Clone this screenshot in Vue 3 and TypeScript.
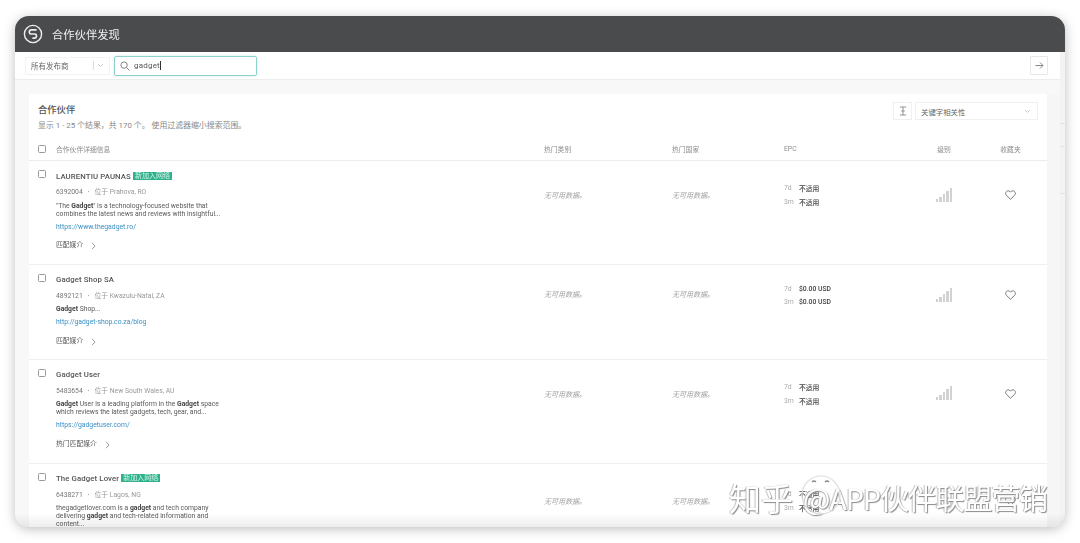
<script setup lang="ts">
interface Epc { label: string; value: string }
interface Row {
  name: string
  isNew: boolean
  id: string
  place: string
  desc: [string, boolean][][]
  url?: string
  match?: string
  epc: string
  rowClass: string
}
const rows: Row[] = [
  {
    name: 'LAURENTIU PAUNAS', isNew: true, id: '6392004', place: 'Prahova, RO',
    desc: [[['"The ', false], ['Gadget', true], ['" is a technology-focused website that', false]],
      [['combines the latest news and reviews with insightful...', false]]],
    url: 'https://www.thegadget.ro/', match: '匹配媒介', epc: '不适用', rowClass: 'r1'
  },
  {
    name: 'Gadget Shop SA', isNew: false, id: '4892121', place: 'Kwazulu-Natal, ZA',
    desc: [[['Gadget', true], [' Shop...', false]]],
    url: 'http://gadget-shop.co.za/blog', match: '匹配媒介', epc: '$0.00 USD', rowClass: 'r2'
  },
  {
    name: 'Gadget User', isNew: false, id: '5483654', place: 'New South Wales, AU',
    desc: [[['Gadget', true], [' User is a leading platform in the ', false], ['Gadget', true], [' space', false]],
      [['which reviews the latest gadgets, tech, gear, and...', false]]],
    url: 'https://gadgetuser.com/', match: '热门匹配媒介', epc: '不适用', rowClass: 'r3'
  },
  {
    name: 'The Gadget Lover', isNew: true, id: '6438271', place: 'Lagos, NG',
    desc: [[['thegadgetlover.com is a ', false], ['gadget', true], [' and tech company', false]],
      [['delivering ', false], ['gadget', true], [' and tech-related information and', false]],
      [['content...', false]]],
    epc: '不适用', rowClass: 'r4'
  }
]
const bars = [3, 5, 8, 11, 14]
function epcLines(v: string): Epc[] {
  return [{ label: '7d', value: v }, { label: '3m', value: v }]
}
</script>

<template>
  <div class="page">
    <div class="window">
      <header class="head">
        <svg class="logo" width="20" height="20" viewBox="0 0 20 20" fill="none" stroke="#eee">
          <circle cx="10" cy="10" r="8.6" stroke-width="1.4" />
          <path d="M13.6 5.800H8.200Q6.400 5.800 6.400 7.600V8.600Q6.400 10 8 10H11.800Q13.400 10 13.400 11.600V12.600Q13.400 14.200 11.800 14.200H9.400" stroke-width="1.700" />
        </svg>
        <span class="title">合作伙伴发现</span>
      </header>

      <div class="lower">
        <div class="main">
          <div class="toolbar">
            <div class="pub">
              <span class="pub-text">所有发布商</span>
              <span class="pub-sep"></span>
              <svg width="7" height="5" viewBox="0 0 7 5" fill="none" stroke="#ccc"><path d="M1 1l2.500 2.500L6 1" /></svg>
            </div>
            <div class="search">
              <svg width="10" height="10" viewBox="0 0 11 11" fill="none" stroke="#777" stroke-width="1"><circle cx="4.500" cy="4.500" r="3.500" /><path d="M7 7l3.500 3.500" /></svg>
              <span class="query">gadget</span>
              <span class="caret"></span>
            </div>
            <button class="go">
              <svg width="9" height="9" viewBox="0 0 9 9" fill="none" stroke="#888"><path d="M0.500 4.500h7.500M5 1.500l3 3-3 3" /></svg>
            </button>
          </div>

          <div class="body">
            <section class="card">
              <div class="card-top">
                <div>
                  <h2 class="card-title">合作伙伴</h2>
                  <p class="card-sub">显示 1 - 25 个结果，共 170 个。 使用过滤器缩小搜索范围。</p>
                </div>
                <div class="sort">
                  <div class="sort-btn">
                    <svg width="8" height="10" viewBox="0 0 9 10" fill="none" stroke="#888"><path d="M1 .5h7M4.500 .5v9M1 9.500h7M2.500 5h4" /></svg>
                  </div>
                  <div class="sort-select">
                    <span>关键字相关性</span>
                    <svg width="7" height="5" viewBox="0 0 7 5" fill="none" stroke="#ccc"><path d="M1 1l2.500 2.500L6 1" /></svg>
                  </div>
                </div>
              </div>

              <div class="grid thead">
                <div class="cell-check"><span class="check"></span></div>
                <div>合作伙伴详细信息</div>
                <div>热门类别</div>
                <div>热门国家</div>
                <div>EPC</div>
                <div class="center">级别</div>
                <div class="center">收藏夹</div>
              </div>

              <div v-for="r in rows" :key="r.id" class="grid row" :class="r.rowClass">
                <div class="cell-check"><span class="check"></span></div>
                <div class="detail">
                  <div class="name-line">
                    <span class="name">{{ r.name }}</span>
                    <span v-if="r.isNew" class="badge">新加入网络</span>
                  </div>
                  <div class="meta"><span class="id">{{ r.id }}</span><span class="dot">•</span><span>位于 {{ r.place }}</span></div>
                  <div class="desc">
                    <div v-for="(line, i) in r.desc" :key="i"><template v-for="(p, j) in line" :key="j"><b v-if="p[1]">{{ p[0] }}</b><template v-else>{{ p[0] }}</template></template></div>
                  </div>
                  <a v-if="r.url" class="url">{{ r.url }}</a>
                  <div v-if="r.match" class="match">
                    <span>{{ r.match }}</span>
                    <svg width="5" height="8" viewBox="0 0 5 8" fill="none" stroke="#999"><path d="M1 .8L4 4 1 7.200" /></svg>
                  </div>
                </div>
                <div class="nodata">无可用数据。</div>
                <div class="nodata">无可用数据。</div>
                <div class="epc">
                  <div v-for="e in epcLines(r.epc)" :key="e.label" class="epc-line">
                    <span class="epc-label">{{ e.label }}</span><span class="epc-value">{{ e.value }}</span>
                  </div>
                </div>
                <div class="level">
                  <span v-for="(b, i) in bars" :key="i" class="bar" :style="{ height: b + 'px' }"></span>
                </div>
                <div class="fav">
                  <svg width="11" height="10" viewBox="0 0 11 10" fill="none" stroke="#777" stroke-width="1"><path d="M5.500 9.300L1.300 5.200C-.2 3.500 1 .8 3.100 .8c1.100 0 1.900.5 2.400 1.400C6 1.300 6.800 .8 7.900 .8c2.100 0 3.300 2.700 1.800 4.400z" /></svg>
                </div>
              </div>
            </section>
            <aside class="strip"></aside>
          </div>
        </div>
        <div class="edge">
          <span class="edge-a"></span>
          <span class="edge-b"></span>
          <span class="edge-c"></span>
        </div>
      </div>
      <div class="fade"></div>
    </div>

    <div class="watermark">
      <span>知乎</span>
      <svg class="wm-cat" width="42" height="44" viewBox="0 0 42 44" fill="none" stroke="#dcdcdc" stroke-width="1.200">
        <circle cx="20" cy="22" r="19" />
        <path d="M11 9q2-2 4 0M24 9q2-2 4 0" stroke="#888" />
      </svg>
      <span class="wm-rest">@APP伙伴联盟营销</span>
    </div>
  </div>
</template>

<style>
html, body { margin: 0; background: #fff; }
</style>

<style scoped>
.page {
  position: relative;
  width: 1080px;
  height: 543px;
  padding: 16px 15px;
  box-sizing: border-box;
  overflow: hidden;
  font-family: Roboto, "Noto Sans CJK SC", sans-serif;
  color: #444;
}
.window {
  position: relative;
  height: 511px;
  border-radius: 14px;
  overflow: hidden;
  background: #f3f3f3;
  box-shadow: 0 2px 12px rgba(0, 0, 0, .26);
  display: flex;
  flex-direction: column;
  filter: blur(.4px);
}
.head {
  flex: 0 0 36px;
  background: #4a4b4d;
  display: flex;
  align-items: center;
  gap: 9px;
  padding-left: 8px;
  color: #f2f2f2;
}
.title { font-size: 11.300px; }
.lower { flex: 1; display: flex; min-height: 0; }
.main { flex: 1; display: flex; flex-direction: column; min-width: 0; }
.edge { width: 5px; flex: none; display: flex; flex-direction: column; }
.edge span { display: block; border-bottom: 1px solid #e3e3e3; box-sizing: border-box; }
.edge-a { height: 72px; }
.edge-b { height: 23px; }
.edge-c { height: 47px; }
.toolbar {
  flex: 0 0 28px;
  background: #fff;
  border-bottom: 1px solid #ececec;
  display: flex;
  align-items: center;
  padding-left: 10px;
  padding-right: 12px;
  box-sizing: border-box;
}
.pub {
  width: 85px;
  height: 18px;
  margin-right: 4px;
  border: 1px solid #f3f3f3;
  box-sizing: border-box;
  display: flex;
  align-items: center;
  padding-left: 5px;
  font-size: 7.500px;
  color: #666;
}
.pub-text { width: 62px; }
.pub-sep { width: 1px; height: 9px; background: #ddd; margin-right: 3px; }
.search {
  width: 143px;
  height: 20px;
  box-sizing: border-box;
  border: 1px solid #8fd0cc;
  border-radius: 2px;
  display: flex;
  align-items: center;
  padding-left: 5px;
  box-shadow: 0 0 2px rgba(124, 201, 196, .5);
}
.query { font-size: 8px; color: #555; margin-left: 4px; letter-spacing: .2px; }
.caret { width: 1px; height: 9px; background: #333; }
.go {
  margin-left: auto;
  width: 18px;
  height: 19px;
  background: #fff;
  border: 1px solid #e8e8e8;
  border-radius: 1px;
  display: flex;
  align-items: center;
  justify-content: center;
  padding: 0;
}
.body { flex: 1; display: flex; padding: 14px 0 0 14px; min-height: 0; background: #f8f8f8; }
.card { width: 1018px; flex: none; background: #fff; }
.strip { flex: 1; background: #f6f6f6; }
.card-top {
  height: 46px;
  display: flex;
  justify-content: space-between;
  padding: 9px 9px 0;
  box-sizing: border-box;
}
.card-title { margin: 0; font-size: 9.300px; line-height: 13px; font-weight: 500; color: #555; }
.card-sub { margin: 4px 0 0; font-size: 7.900px; line-height: 11px; color: #888; }
.sort { display: flex; gap: 3px; margin-top: -1px; margin-left: auto; }
.sort-btn {
  width: 19px;
  height: 18px;
  border: 1px solid #f0f0f0;
  box-sizing: border-box;
  display: flex;
  align-items: center;
  justify-content: center;
}
.sort-select {
  width: 123px;
  height: 18px;
  border: 1px solid #f0f0f0;
  box-sizing: border-box;
  display: flex;
  align-items: center;
  justify-content: space-between;
  padding: 0 6px 0 5px;
  font-size: 7.400px;
  color: #666;
}
.grid { display: grid; grid-template-columns: 27px 488px 128px 112px 130px 60px 73px; }
.thead {
  height: 21px;
  padding-bottom: 2px;
  align-items: center;
  font-size: 6.800px;
  color: #8c8c8c;
  border-bottom: 1px solid #ececec;
  box-sizing: border-box;
}
.center { text-align: center; }
.cell-check { padding-left: 9px; }
.check {
  display: block;
  width: 6px;
  height: 6px;
  border: 1px solid #999;
  border-radius: 1.500px;
}
.row { border-bottom: 1px solid #efefef; box-sizing: border-box; position: relative; }
.row .cell-check { padding-top: 9px; }
.r1 { height: 104px; }
.r2 { height: 95px; }
.r3 { height: 104px; }
.r4 { height: 80px; }
.detail { padding-top: 8px; }
.r1 .detail { padding-top: 9px; }
.name-line { display: flex; align-items: center; gap: 2px; height: 12px; }
.name { font-size: 7.800px; font-weight: 500; color: #555; letter-spacing: .1px; }
.badge {
  background: #2db38c;
  color: #d9f3ea;
  font-size: 7px;
  line-height: 8px;
  height: 8px;
  padding: 0 2px;
}
.meta { margin-top: 6px; font-size: 6.800px; line-height: 10px; color: #999; display: flex; }
.r1 .meta { margin-top: 5px; }
.id { color: #777; }
.dot { margin: 0 5px; font-size: 5px; }
.desc { margin-top: 4px; font-size: 6.800px; line-height: 8px; color: #5a5a5a; width: 190px; white-space: nowrap; }
.r1 .desc { margin-top: 5px; }
.desc b { font-weight: 700; color: #444; }
.url { display: block; margin-top: 5px; font-size: 6.800px; line-height: 9px; color: #3b8fc4; }
.match { margin-top: 9px; display: flex; align-items: center; gap: 8px; font-size: 6.800px; line-height: 11px; color: #555; }
.r1 .match { margin-top: 8px; }
.nodata { font-size: 7px; font-style: italic; color: #a0a0a0; padding-top: 29px; }
.r2 .nodata { padding-top: 24px; }
.r3 .nodata { padding-top: 29px; }
.r4 .nodata { padding-top: 32px; }
.epc { padding-top: 20px; font-size: 6.800px; }
.r2 .epc { padding-top: 17px; }
.r3 .epc { padding-top: 20px; }
.r4 .epc { padding-top: 23px; }
.epc-line { height: 14px; display: flex; align-items: center; }
.r2 .epc-line { height: 13px; }
.epc-label { width: 15px; color: #aaa; }
.epc-value { color: #444; font-weight: 500; }
.level { display: flex; justify-content: center; align-items: flex-end; gap: 1px; height: 41px; }
.r2 .level { height: 37px; }
.r3 .level { height: 40px; }
.r4 .level { height: 44px; }
.bar { width: 2.500px; background: #d2d2d2; }
.fav { text-align: center; padding-top: 24px; }
.r2 .fav { padding-top: 20px; }
.r3 .fav { padding-top: 24px; }
.r4 .fav { padding-top: 27px; }
.fade {
  position: absolute;
  left: 0;
  right: 0;
  bottom: 0;
  height: 14px;
  background: linear-gradient(rgba(0, 0, 0, 0), rgba(0, 0, 0, .07));
  pointer-events: none;
}
.watermark {
  position: absolute;
  left: 729px;
  top: 475px;
  display: flex;
  align-items: center;
  font-family: "Noto Sans CJK SC", sans-serif;
  font-size: 32px;
  line-height: 44px;
  color: #fff;
  text-shadow: 1px 1px 1px #8a8a8a, -1px 0 1px #bdbdbd;
  white-space: nowrap;
}
.wm-cat { position: absolute; left: 72px; top: -2px; }
.wm-rest { margin-left: 10px; font-size: 29px; letter-spacing: -1.200px; }
</style>
